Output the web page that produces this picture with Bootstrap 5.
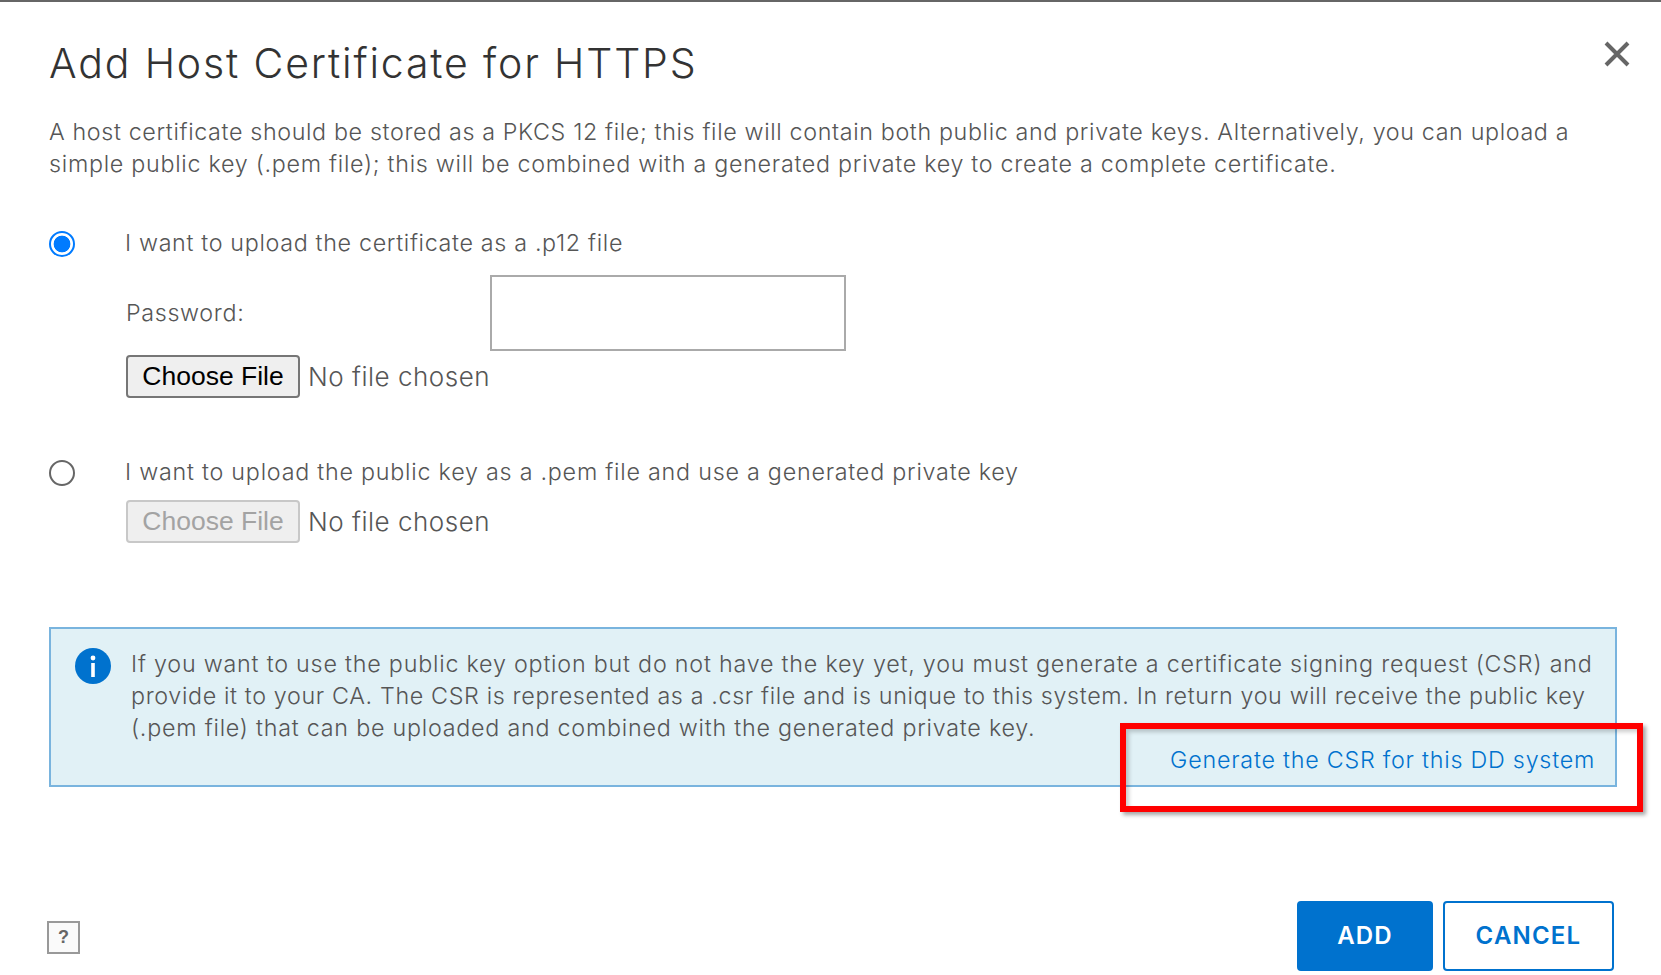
<!DOCTYPE html>
<html lang="en">
<head>
<meta charset="utf-8">
<title>Add Host Certificate for HTTPS</title>
<link href="https://cdn.jsdelivr.net/npm/bootstrap@5.3.0/dist/css/bootstrap.min.css" rel="stylesheet">
<style>
html,body{height:975px;overflow:hidden;background:#fff}
body{font-family:Inter,"Liberation Sans",sans-serif;font-weight:300;color:#565656}
.dlg{height:975px;border-top:2px solid #666;padding:0 44px 4px 49px;display:flex;flex-direction:column;position:relative}
.dlg-title{font-family:Inter,sans-serif;font-weight:300;font-size:41px;line-height:50px;color:#333;margin:36px 0 0;letter-spacing:1.84px}
.closer{position:absolute;top:39px;right:31px;width:26px;height:26px;padding:0;border:0;background:none;display:flex}
.lead-text{font-size:23.3px;line-height:32px;margin:28px 0 0;width:1600px;letter-spacing:.63px}
.ln-wide{letter-spacing:.71px}
.opt{margin-top:48px;display:flex;align-items:center;font-size:23.3px;line-height:32px;letter-spacing:.66px}
.opt-two{margin-top:59px;letter-spacing:.76px}
.radio-dot{appearance:none;width:26px;height:26px;border:2px solid #666;border-radius:50%;flex:none;margin:0 50px 0 0;background:#fff}
.radio-dot:checked{border-color:#007bff;background:radial-gradient(circle,#007bff 0 8px,#fff 8.7px)}
.opt label{position:relative;top:-1px}
.subrow{margin-left:77px}
.pw-row{display:flex;align-items:center;margin-top:15px;font-size:23.3px;letter-spacing:.66px}
.pw-row label{width:364px}
.pw-input{width:356px;height:76px;border:2px solid #aaa;border-radius:0;background:#fff}
.file-row{display:flex;align-items:center;margin-top:4px;font-size:26px;letter-spacing:.5px}
.file-row.second{margin-top:11px}
.file-btn{width:174px;height:43px;padding:0;font-family:"Liberation Sans",sans-serif;font-weight:400;font-size:26.5px;line-height:1;letter-spacing:0;color:#000;background:#efefef;border:2px solid #767676;border-radius:4px;margin-right:8px}
.file-btn:disabled{color:#a3a3a3;border-color:#c8c8c8;opacity:1;background:#efefef}
.note{margin-top:84px;height:160px;background:#e1f1f6;border:2px solid #79b4de;padding:19px 20px 0 24px;display:flex;font-size:23.3px;line-height:32px;letter-spacing:.66px;color:#565656}
.note-ico{flex:none;width:36px;height:36px}
.note-body{margin-left:20px;flex:1}
.note-body p{margin:0;white-space:nowrap}
.ln-a{letter-spacing:.78px}
.ln-b{letter-spacing:.64px}
.ln-c{letter-spacing:.76px}
.note-link{display:block;text-align:right;color:#0072ce;text-decoration:none;letter-spacing:.76px}
.redbox{position:absolute;left:1120px;top:721px;width:523px;height:89px;border:6px solid #f00;box-shadow:3px 3px 4px rgba(0,0,0,.35),inset 3px 3px 4px rgba(0,0,0,.2);pointer-events:none}
.foot{margin-top:auto;display:flex;align-items:flex-end;justify-content:space-between}
.help-box{width:33px;height:33px;margin:0 0 17px -2px;border:2px solid #999;background:#fafafa;color:#666;font-size:18px;font-weight:600;line-height:29px;text-align:center;font-family:"Liberation Sans",sans-serif}
.act{height:70px;border-radius:4px;font-size:24px;font-weight:600;letter-spacing:1.2px;border:2px solid #0072ce;padding:0}
.act-add{width:136px;background:#0072ce;color:#fff;margin-right:10px}
.act-cancel{width:171px;background:#fff;color:#0072ce;margin-right:3px}
.act:hover{border-color:#0072ce}
</style>
</head>
<body>
<div class="dlg">
  <h1 class="dlg-title">Add Host Certificate for HTTPS</h1>
  <button class="closer" aria-label="Close"><svg width="26" height="26" viewBox="0 0 26 26"><path d="M2 2 24 24M24 2 2 24" stroke="#666" stroke-width="4" fill="none"/></svg></button>
  <p class="lead-text">A host certificate should be stored as a PKCS 12 file; this file will contain both public and private keys. Alternatively, you can upload a<br><span class="ln-wide">simple public key (.pem file); this will be combined with a generated private key to create a complete certificate.</span></p>

  <div class="opt"><input class="radio-dot" type="radio" name="k" checked id="r1"><label for="r1">I want to upload the certificate as a .p12 file</label></div>
  <div class="subrow">
    <div class="pw-row"><label for="pw">Password:</label><input class="pw-input" id="pw" type="password"></div>
    <div class="file-row"><button class="file-btn">Choose File</button><span>No file chosen</span></div>
  </div>

  <div class="opt opt-two"><input class="radio-dot" type="radio" name="k" id="r2"><label for="r2">I want to upload the public key as a .pem file and use a generated private key</label></div>
  <div class="subrow">
    <div class="file-row second"><button class="file-btn" disabled>Choose File</button><span>No file chosen</span></div>
  </div>

  <div class="note">
    <svg class="note-ico" viewBox="0 0 36 36"><circle cx="18" cy="18" r="18" fill="#0072ce"/><circle cx="18" cy="10" r="2.4" fill="#fff"/><rect x="16.2" y="15" width="3.6" height="14" fill="#fff"/></svg>
    <div class="note-body">
      <p><span class="ln-a">If you want to use the public key option but do not have the key yet, you must generate a certificate signing request (CSR) and</span><br><span class="ln-b">provide it to your CA. The CSR is represented as a .csr file and is unique to this system. In return you will receive the public key</span><br><span class="ln-c">(.pem file) that can be uploaded and combined with the generated private key.</span></p>
      <a class="note-link" href="#">Generate the CSR for this DD system</a>
    </div>
  </div>
  <div class="redbox"></div>

  <div class="foot">
    <div class="help-box">?</div>
    <div class="d-flex">
      <button class="btn act act-add">ADD</button>
      <button class="btn act act-cancel">CANCEL</button>
    </div>
  </div>
</div>
<script src="https://cdn.jsdelivr.net/npm/bootstrap@5.3.0/dist/js/bootstrap.bundle.min.js"></script>
</body>
</html>
